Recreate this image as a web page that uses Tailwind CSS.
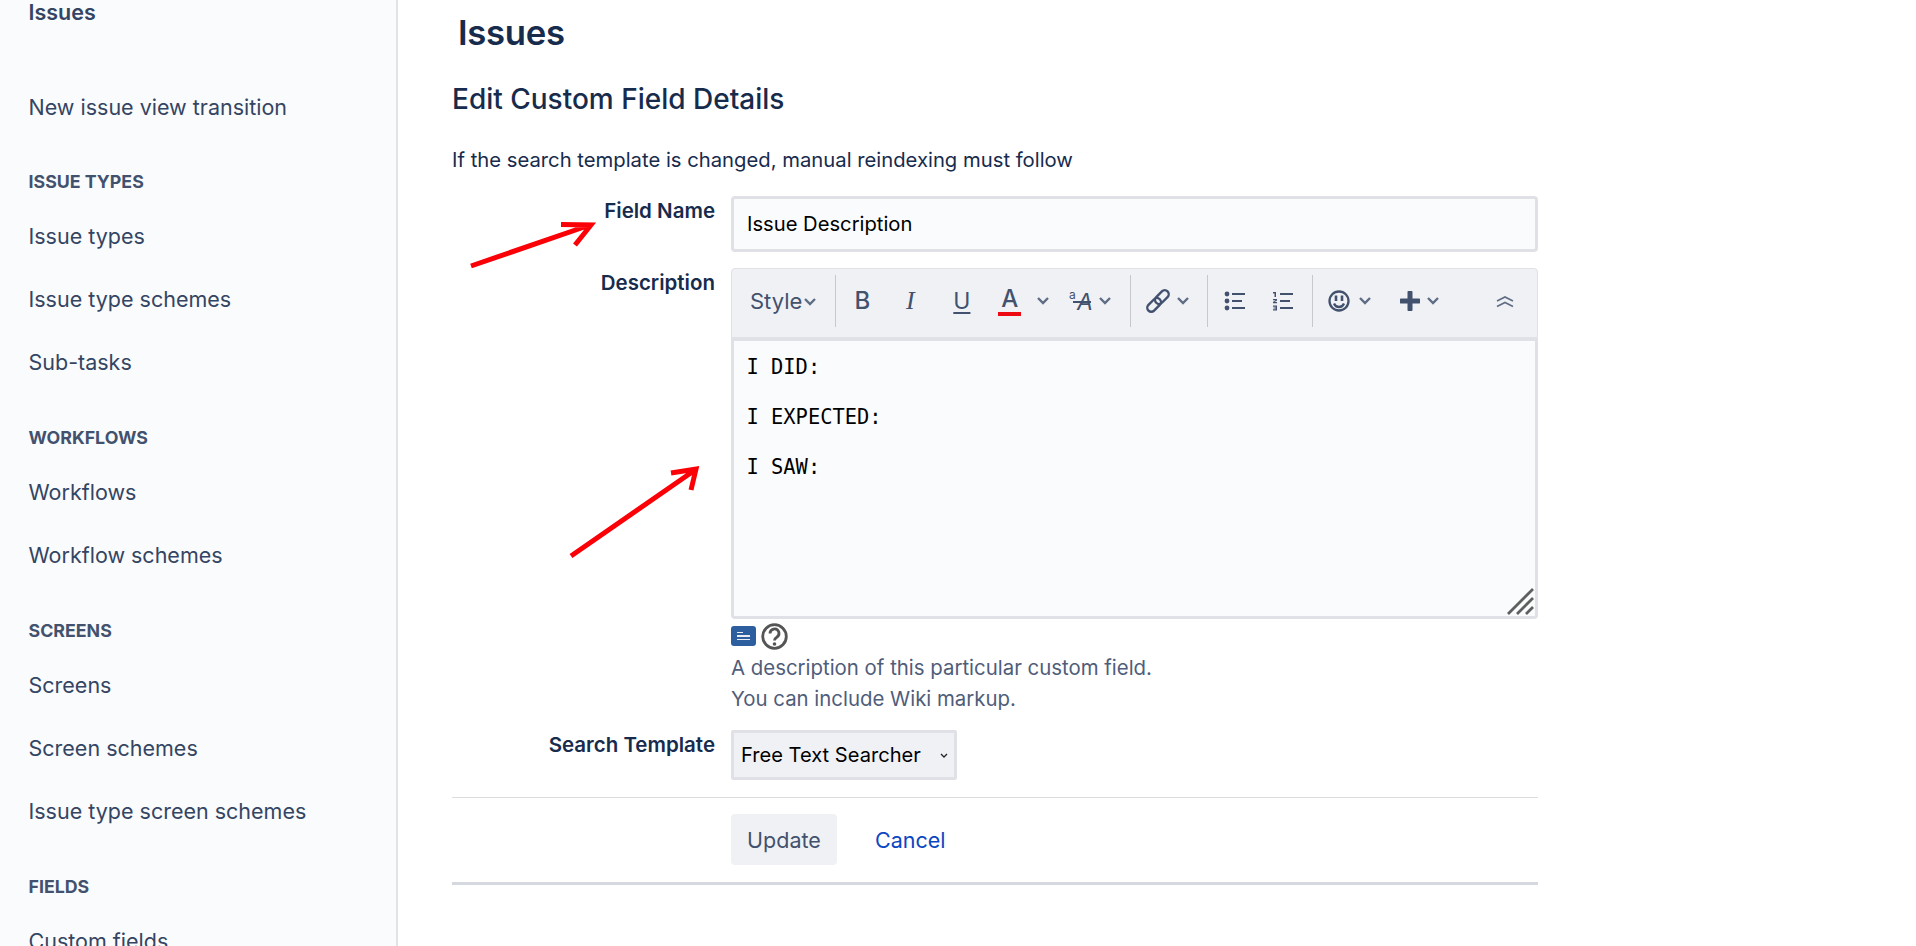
<!DOCTYPE html>
<html lang="en">
<head>
  <meta charset="UTF-8">
  <title>Edit Custom Field Details</title>
  <script src="https://cdn.jsdelivr.net/npm/@tailwindcss/browser@4"></script>
</head>
<body class="bg-white font-['Inter',sans-serif] text-[#172b4d] overflow-hidden">
<div class="relative flex h-[946px] w-[1916px] overflow-hidden">

  <!-- sidebar -->
  <aside class="w-[398px] shrink-0 h-full bg-[#fafbfc] border-r-2 border-[#e2e3e6] pl-[28.500px] text-[#344563] text-[21.5px] overflow-hidden">
    <div class="h-[25px] leading-[25px] font-semibold">Issues</div>
    <div class="mt-[69px] h-[26px] leading-[26px]">New issue view transition</div>
    <div class="mt-[50px] h-[24px] leading-[24px] text-[17.800px] font-bold text-[#42526e]">ISSUE TYPES</div>
    <div class="mt-[29px] flex flex-col gap-[37px]">
      <div class="h-[26px] leading-[26px]">Issue types</div>
      <div class="h-[26px] leading-[26px]">Issue type schemes</div>
      <div class="h-[26px] leading-[26px]">Sub-tasks</div>
    </div>
    <div class="mt-[51px] h-[24px] leading-[24px] text-[17.800px] font-bold text-[#42526e]">WORKFLOWS</div>
    <div class="mt-[29px] flex flex-col gap-[37px]">
      <div class="h-[26px] leading-[26px]">Workflows</div>
      <div class="h-[26px] leading-[26px]">Workflow schemes</div>
    </div>
    <div class="mt-[51px] h-[24px] leading-[24px] text-[17.800px] font-bold text-[#42526e]">SCREENS</div>
    <div class="mt-[29px] flex flex-col gap-[37px]">
      <div class="h-[26px] leading-[26px]">Screens</div>
      <div class="h-[26px] leading-[26px]">Screen schemes</div>
      <div class="h-[26px] leading-[26px]">Issue type screen schemes</div>
    </div>
    <div class="mt-[51px] h-[24px] leading-[24px] text-[17.800px] font-bold text-[#42526e]">FIELDS</div>
    <div class="mt-[29px] h-[26px] leading-[26px]">Custom fields</div>
  </aside>

  <!-- main -->
  <main class="w-[1086px] ml-[54px] shrink-0">
    <h1 class="ml-[6px] mt-[11px] h-[42px] leading-[42px] text-[34.700px] font-semibold tracking-[-0.3px] text-[#172b4d]">Issues</h1>
    <h2 class="mt-[29px] h-[34px] leading-[34px] text-[28px] font-medium text-[#172b4d]">Edit Custom Field Details</h2>
    <p class="mt-[31px] h-[26px] leading-[26px] text-[20.260px] text-[#172b4d]">If the search template is changed, manual reindexing must follow</p>

    <div class="mt-[23px] flex">
      <div class="w-[263px] text-right text-[20.5px] font-semibold leading-[26px] pt-[2px]">Field Name</div>
      <div class="ml-[16px] w-[807px] h-[56px] border-[3px] border-[#dfe1e6] rounded-[4px] bg-[#fafbfc] flex items-center pl-[13px] pt-[1px] text-[20.200px] text-[#000]">Issue Description</div>
    </div>

    <div class="mt-[16px] flex">
      <div class="w-[263px] text-right text-[20.5px] font-semibold leading-[26px] pt-[2px]">Description</div>
      <div class="ml-[16px] w-[807px]">
        <div class="h-[70px] border border-[#dfe1e6] rounded-t-[4px] bg-[#f0f1f5] flex items-center pb-[4px] text-[#42526e]">
          <span class="ml-[18px] text-[22px] leading-none">Style</span>
          <svg class="ml-[1px] mt-[1px]" width="14" height="10" viewBox="0 0 14 10" fill="none" stroke="#5e6c84" stroke-width="2.4"><path d="M2 2l5 5 5-5"/></svg>
          <span class="ml-[18px] w-[1px] h-[52px] bg-[#c6c8cd]"></span>
          <span class="ml-[18px] w-[18px] text-[24px] leading-none font-medium">B</span>
          <span class="ml-[33.500px] w-[14px] font-['Liberation_Serif',serif] italic text-[26px] leading-none">I</span>
          <span class="ml-[31px] w-[22px] text-[23px] leading-none underline decoration-2 underline-offset-[3px] text-center">U</span>
          <span class="ml-[25px] w-[24px] flex flex-col items-center">
            <span class="text-[24px] leading-[26px] font-medium">A</span>
            <span class="w-[23px] h-[4px] bg-[#ee0a12]"></span>
          </span>
          <svg class="ml-[14px]" width="14" height="10" viewBox="0 0 14 10" fill="none" stroke="#5e6c84" stroke-width="2.4"><path d="M2 2l5 5 5-5"/></svg>
          <svg class="ml-[17px]" width="30" height="28" viewBox="0 0 30 28" fill="none"><text x="2" y="12" font-size="12" font-family="Inter" fill="#42526e">a</text><text x="10" y="23" font-size="23" font-style="italic" font-family="Inter" fill="#42526e">A</text><path d="M6 15h18" stroke="#42526e" stroke-width="2"/></svg>
          <svg class="ml-[1px]" width="14" height="10" viewBox="0 0 14 10" fill="none" stroke="#5e6c84" stroke-width="2.4"><path d="M2 2l5 5 5-5"/></svg>
          <span class="ml-[18px] w-[1px] h-[52px] bg-[#c6c8cd]"></span>
          <svg class="ml-[14px]" width="26" height="26" viewBox="0 0 26 26" fill="none" stroke="#42526e" stroke-width="2.4"><g transform="rotate(-45 13 13)"><rect x="-0.500" y="9" width="16" height="8" rx="4"/><rect x="10.500" y="9" width="16" height="8" rx="4"/></g></svg>
          <svg class="ml-[5px]" width="14" height="10" viewBox="0 0 14 10" fill="none" stroke="#5e6c84" stroke-width="2.4"><path d="M2 2l5 5 5-5"/></svg>
          <span class="ml-[17px] w-[1px] h-[52px] bg-[#c6c8cd]"></span>
          <svg class="ml-[16px]" width="22" height="20" viewBox="0 0 22 20" fill="#42526e"><circle cx="3" cy="3" r="2.4"/><circle cx="3" cy="10" r="2.4"/><circle cx="3" cy="17" r="2.4"/><path d="M8 2h13v2H8zM8 9h10v2H8zM8 16h13v2H8z"/></svg>
          <svg class="ml-[26px]" width="22" height="20" viewBox="0 0 22 20" fill="#42526e"><path d="M1 1h3v5H2.500V2.500H1zM1 8h4v1.400L2.500 11H5v1.200H1v-1.300L3.500 9.200H1zM1 14.500h4v5H1v-1.200h2.700v-.8H1.500v-1H3.700v-.8H1z"/><path d="M8 2h13v2H8zM8 9h10v2H8zM8 16h13v2H8z"/></svg>
          <span class="ml-[18px] w-[1px] h-[52px] bg-[#c6c8cd]"></span>
          <svg class="ml-[15px]" width="22" height="22" viewBox="0 0 22 22" fill="none" stroke="#42526e" stroke-width="2.3"><circle cx="11" cy="11" r="9.500"/><path d="M8 5.500v5.500M14 5.500v5.500" stroke-width="2.600"/><path d="M6 13.500c1 2.500 3 3.500 5 3.500s4-1 5-3.500" fill="none"/></svg>
          <svg class="ml-[8px]" width="14" height="10" viewBox="0 0 14 10" fill="none" stroke="#5e6c84" stroke-width="2.4"><path d="M2 2l5 5 5-5"/></svg>
          <svg class="ml-[28px]" width="20" height="20" viewBox="0 0 20 20" fill="#42526e"><path d="M7.500 1.500a2.500 2.500 0 0 1 5 0v6h6a2.500 2.500 0 0 1 0 5h-6v6a2.500 2.500 0 0 1-5 0v-6h-6a2.500 2.500 0 0 1 0-5h6z"/></svg>
          <svg class="ml-[6px]" width="14" height="10" viewBox="0 0 14 10" fill="none" stroke="#5e6c84" stroke-width="2.4"><path d="M2 2l5 5 5-5"/></svg>
          <svg class="ml-[56px]" width="18" height="13" viewBox="0 0 18 13" fill="none" stroke="#5e6c84" stroke-width="1.600"><path d="M1 6l8-4 8 4M1 11.500l8-4 8 4"/></svg>
        </div>
        <div class="relative h-[281px] border-[3px] border-[#dfe1e6] rounded-b-[4px] bg-[#fafbfc] pl-[12.500px] pt-[12.500px] font-['DejaVu_Sans_Mono',monospace] text-[20.4px] text-black leading-[26px]">
          <div>I DID:</div>
          <div class="mt-[24px]">I EXPECTED:</div>
          <div class="mt-[24px]">I SAW:</div>
          <svg class="absolute right-[1px] bottom-[1px]" width="28" height="28" viewBox="0 0 28 28" stroke="#5f5f5f" stroke-width="2.800"><path d="M2 27L27 2M11 27L27 11M20 27l7-7"/></svg>
        </div>
        <div class="mt-[4px] flex items-center h-[26px]">
          <span class="flex flex-col items-start justify-center gap-[2px] w-[25px] h-[20px] rounded-[3px] bg-[#2d5f9f] pl-[6px]">
            <span class="w-[6px] h-[1.500px] bg-white/90"></span>
            <span class="w-[13px] h-[1.500px] bg-white/90"></span>
            <span class="w-[13px] h-[1.500px] bg-white/90"></span>
          </span>
          <svg class="ml-[5px]" width="27" height="27" viewBox="0 0 27 27" fill="none" stroke="#555" stroke-width="2.800"><circle cx="13.500" cy="13.500" r="11.800"/><path d="M9 10.500a4.500 4.500 0 1 1 6.800 3.800c-1.400.9-2.300 1.700-2.300 3.200" stroke-width="2.800"/><circle cx="13.500" cy="21" r="1.800" fill="#555" stroke="none"/></svg>
        </div>
        <div class="mt-[2.500px] text-[20.400px] leading-[31px] text-[#4f5d7a]">
          <div>A description of this particular custom field.</div>
          <div>You can include Wiki markup.</div>
        </div>
      </div>
    </div>

    <div class="mt-[16px] flex">
      <div class="w-[263px] text-right text-[20.5px] font-semibold leading-[26px] pt-[2px]">Search Template</div>
      <div class="ml-[16px] w-[226px] h-[50px] border-[3px] border-[#dfe1e6] rounded-[2px] bg-[#f0f1f5] flex items-center pl-[7px] pt-[1px] text-[20.100px] text-black">
        <span>Free Text Searcher</span>
        <svg class="ml-auto mr-[6px] mt-[1px]" width="8" height="6" viewBox="0 0 8 6" fill="none" stroke="#222" stroke-width="1.300"><path d="M1 1l3 3 3-3"/></svg>
      </div>
    </div>

    <div class="mt-[17px] border-t border-[#dcdcdc] pt-[17px] pl-[279px] flex items-center h-[68px]">
      <span class="w-[106px] h-[51px] rounded-[4px] bg-[#f0f1f5] flex items-center justify-center text-[#42526e] text-[21.5px] pt-[1px]">Update</span>
      <a class="ml-[38px] text-[#0b46c2] text-[21.5px] pt-[1px]">Cancel</a>
    </div>
    <div class="mt-[17px] h-[3px] bg-[#d5d8df]"></div>
  </main>

  <!-- red annotations over the form -->
  <svg class="absolute left-0 top-0 pointer-events-none" width="1916" height="946" fill="none" stroke="#fb0007" stroke-width="5">
    <path d="M471 266L590 225M561 224.500L591 225L575 245"/>
    <path d="M571 556L695 470M671 473L696 469L691 490"/>
  </svg>
</div>
</body>
</html>
